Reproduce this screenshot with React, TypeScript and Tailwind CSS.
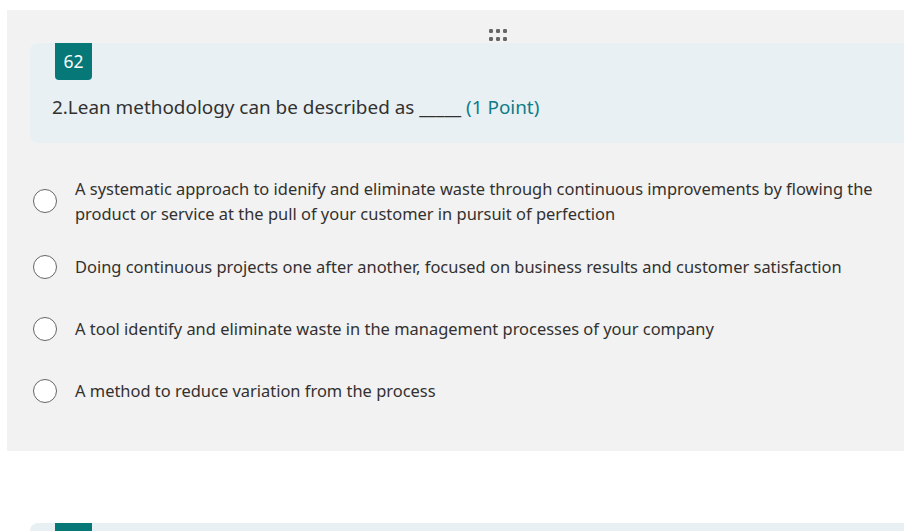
import React from "react";

function Radio() {
  return (
    <div className="w-[24px] h-[24px] shrink-0 rounded-full border-[1.5px] border-[#666666] bg-white" />
  );
}

const options = [
  {
    text: "A systematic approach to idenify and eliminate waste through continuous improvements by flowing the product or service at the pull of your customer in pursuit of perfection",
    mt: "mt-[33px]",
  },
  {
    text: "Doing continuous projects one after another, focused on business results and customer satisfaction",
    mt: "mt-[28px]",
  },
  {
    text: "A tool identify and eliminate waste in the management processes of your company",
    mt: "mt-[37px]",
  },
  {
    text: "A method to reduce variation from the process",
    mt: "mt-[37px]",
  },
];

export default function App() {
  return (
    <div className="w-[904px] h-[531px] overflow-hidden bg-white font-['Noto_Sans',sans-serif] text-[#323130]">
      <div className="mt-[10px] ml-[7px] h-[441px] bg-[#f2f2f2]">
        <div className="h-[33px] pl-[482px] pt-[19px]">
          <svg width="18" height="12" viewBox="0 0 18 12">
            <g fill="#666666">
              <rect x="0" y="0" width="4" height="4" rx="1.2" />
              <rect x="7" y="0" width="4" height="4" rx="1.2" />
              <rect x="14" y="0" width="4" height="4" rx="1.2" />
              <rect x="0" y="8" width="4" height="4" rx="1.2" />
              <rect x="7" y="8" width="4" height="4" rx="1.2" />
              <rect x="14" y="8" width="4" height="4" rx="1.2" />
            </g>
          </svg>
        </div>
        <div className="ml-[23px] h-[100px] rounded-l-[8px] bg-[#e8f0f3]">
          <div className="ml-[25px] w-[37px] h-[37px] rounded-b-[4px] bg-[#077878] flex items-center justify-center text-white text-[17.5px]">
            62
          </div>
          <div className="ml-[22px] mt-[14px] text-[18.9px] leading-[26px]">
            2.Lean methodology can be described as _____ <span className="text-[#0f7c88]">(1 Point)</span>
          </div>
        </div>
        <div className="pl-[26px] pr-[20px]">
          {options.map((o, i) => (
            <div key={i} className={`${o.mt} flex items-center`}>
              <Radio />
              <div className="ml-[18px] text-[16.45px] leading-[25px]">{o.text}</div>
            </div>
          ))}
        </div>
      </div>
      <div className="mt-[72px] ml-[30px] h-[20px] rounded-tl-[8px] bg-[#e8f0f3]">
        <div className="ml-[25px] w-[37px] h-[20px] bg-[#077878]" />
      </div>
    </div>
  );
}
